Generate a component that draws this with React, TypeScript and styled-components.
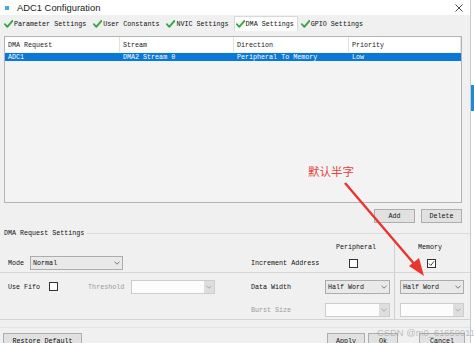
import React from 'react';
import styled, { createGlobalStyle } from 'styled-components';

const MONO = `"Liberation Mono", "DejaVu Sans Mono", monospace`;
const SANS = `"Liberation Sans", Arial, sans-serif`;

const GlobalStyle = createGlobalStyle`
  html, body {
    margin: 0;
    padding: 0;
    background: #ffffff;
    overflow: hidden;
  }
`;

const Page = styled.div`
  position: relative;
  display: flex;
  width: 474px;
  height: 343px;
  overflow: hidden;
  background: #ffffff;
`;

const Window = styled.div`
  width: 471px;
  height: 360px;
  flex-shrink: 0;
  display: flex;
  flex-direction: column;
  background: #f0f0f0;
  border-right: 1px solid #c9c9c9;
  box-sizing: border-box;
`;

const EdgeStrip = styled.div`
  flex: 1;
  display: flex;
  flex-direction: column;
`;

const EdgeBlue = styled.div`
  margin-top: 85px;
  height: 26px;
  background: #1b8bd6;
`;

const TitleBar = styled.div`
  height: 15px;
  flex-shrink: 0;
  display: flex;
  align-items: center;
  padding: 0 7px 0 5px;
  background: #ffffff;
  font: 9.4px ${SANS};
  color: #1a1a1a;
`;

const TitleIcon = styled.div`
  width: 4px;
  height: 4px;
  margin-right: 8px;
  background: #4aa6dc;
`;

const TitleText = styled.div`
  flex: 1;
`;

const TabBar = styled.div`
  height: 16px;
  flex-shrink: 0;
  display: flex;
  align-items: flex-end;
  gap: 1px;
  padding-left: 2px;
  background: #f0f0f0;
`;

const Tab = styled.div<{ $active?: boolean }>`
  height: 15px;
  display: flex;
  align-items: center;
  gap: 1px;
  padding: 0 3px 0 1px;
  box-sizing: border-box;
  font: 6.7px ${MONO};
  color: #111;
  background: ${p => (p.$active ? '#ffffff' : '#f0f0f0')};
  border: 1px solid ${p => (p.$active ? '#d9d9d9' : 'transparent')};
  border-bottom: none;
`;

const Content = styled.div`
  display: flex;
  flex-direction: column;
  padding: 5px 8px 0 4px;
`;

const Table = styled.div`
  height: 167px;
  box-sizing: border-box;
  border: 1px solid #b4b4b4;
  background: #f3f3f3;
  display: flex;
  flex-direction: column;
  gap: 1px;
`;

const TableRow = styled.div<{ $head?: boolean; $selected?: boolean }>`
  display: grid;
  grid-template-columns: 115px 114px 115px 1fr;
  height: ${p => (p.$head ? '15px' : '8px')};
  background: ${p => (p.$head ? '#ffffff' : p.$selected ? '#0a78d4' : 'transparent')};
  color: ${p => (p.$selected ? '#ffffff' : '#1a1a1a')};
  font: 6.7px ${MONO};
`;

const Cell = styled.div<{ $head?: boolean }>`
  display: flex;
  align-items: center;
  padding-left: 3px;
  white-space: nowrap;
  border-right: ${p => (p.$head ? '1px solid #e2e2e2' : 'none')};
`;

const ButtonRow = styled.div`
  display: flex;
  justify-content: flex-end;
  gap: 6px;
  margin-top: 6px;
`;

const Button = styled.div<{ $w: number }>`
  width: ${p => p.$w}px;
  height: 14px;
  box-sizing: border-box;
  display: flex;
  align-items: center;
  justify-content: center;
  background: #e1e1e1;
  border: 1px solid #adadad;
  font: 6.7px ${MONO};
  color: #111;
`;

const GroupHeader = styled.div`
  display: flex;
  align-items: center;
  gap: 3px;
  height: 12px;
  margin-top: 4px;
  font: 6.7px ${MONO};
  color: #111;
`;

const GroupLine = styled.div`
  flex: 1;
  height: 1px;
  background: #dcdcdc;
  margin-right: -8px;
`;

const SettingsGrid = styled.div`
  display: grid;
  grid-template-columns: 245px 80px 69px 1fr;
  grid-template-rows: 15px 18px 1px 27px 19px;
  border-bottom: 1px solid #d2d2d2;
  font: 6.7px ${MONO};
  color: #111;
`;

const GridCell = styled.div<{ $pad?: number; $mem?: boolean; $gray?: boolean }>`
  display: flex;
  align-items: center;
  padding-left: ${p => p.$pad ?? 0}px;
  border-left: ${p => (p.$mem ? '1px solid #cfcfcf' : 'none')};
  color: ${p => (p.$gray ? '#9a9a9a' : '#111')};
  white-space: nowrap;
`;

const Divider = styled.div`
  grid-column: 1 / -1;
  background: #d6d6d6;
`;

const Label = styled.span<{ $gray?: boolean; $gap?: number; $lead?: number }>`
  color: ${p => (p.$gray ? '#9a9a9a' : '#111')};
  margin-right: ${p => p.$gap ?? 0}px;
  margin-left: ${p => p.$lead ?? 0}px;
`;

const SelectBox = styled.div<{ $w: number; $disabled?: boolean }>`
  width: ${p => p.$w}px;
  height: 14px;
  box-sizing: border-box;
  display: flex;
  align-items: stretch;
  border: 1px solid ${p => (p.$disabled ? '#cdcdcd' : '#acacac')};
  background: ${p => (p.$disabled ? '#fcfcfc' : '#e9e9e9')};
  color: #111;
`;

const SelectValue = styled.div`
  flex: 1;
  display: flex;
  align-items: center;
  padding-left: 2px;
`;

const SelectArrow = styled.div<{ $disabled?: boolean }>`
  width: 10px;
  display: flex;
  align-items: center;
  justify-content: center;
  background: ${p => (p.$disabled ? '#dedede' : 'transparent')};
`;

const CheckBox = styled.div`
  width: 9px;
  height: 9px;
  box-sizing: border-box;
  border: 1px solid #333;
  background: #fff;
  display: flex;
  align-items: center;
  justify-content: center;
`;

const Footer = styled.div`
  margin-top: 7px;
  border-top: 1px solid #e4e4e4;
  padding: 5px 5px 0 3px;
  display: flex;
  align-items: flex-start;
`;

const FooterRight = styled.div`
  margin-left: auto;
  display: flex;
`;

const FooterButton = styled(Button)<{ $gap?: number }>`
  height: 15px;
  margin-left: ${p => p.$gap ?? 0}px;
`;

const Overlay = styled.svg`
  position: absolute;
  left: 0;
  top: 0;
  pointer-events: none;
`;

const Note = styled.div`
  position: absolute;
  left: 308px;
  top: 163px;
  font: 11.5px "Noto Sans CJK SC", "Noto Sans", sans-serif;
  color: #e8413b;
`;

const Watermark = styled.div`
  position: absolute;
  left: 377px;
  top: 327px;
  font: 9.4px ${SANS};
  color: rgba(150, 150, 150, 0.6);
  white-space: nowrap;
`;

const TabCheck = () => (
  <svg width="9" height="8" viewBox="0 0 9 8">
    <path d="M0.8 4.2 L3.3 6.8 L8.4 0.9" fill="none" stroke="#3aa84a" strokeWidth="1.9" strokeLinecap="round" strokeLinejoin="round" />
  </svg>
);

const Chevron = ({ light }: { light?: boolean }) => (
  <svg width="6" height="4" viewBox="0 0 6 4">
    <polyline points="0.5,0.8 3,3.2 5.5,0.8" fill="none" stroke={light ? '#9c9c9c' : '#5a5a5a'} strokeWidth="0.8" />
  </svg>
);

const Select = ({ w, value, disabled }: { w: number; value?: string; disabled?: boolean }) => (
  <SelectBox $w={w} $disabled={disabled}>
    <SelectValue>{value}</SelectValue>
    <SelectArrow $disabled={disabled}>
      <Chevron light={disabled} />
    </SelectArrow>
  </SelectBox>
);

const Check = ({ checked }: { checked?: boolean }) => (
  <CheckBox>
    {checked && (
      <svg width="7" height="7" viewBox="0 0 7 7">
        <polyline points="1,3.6 2.8,5.4 6,1.4" fill="none" stroke="#333" strokeWidth="0.9" />
      </svg>
    )}
  </CheckBox>
);

const tabs = ['Parameter Settings', 'User Constants', 'NVIC Settings', 'DMA Settings', 'GPIO Settings'];
const columns = ['DMA Request', 'Stream', 'Direction', 'Priority'];
const row = ['ADC1', 'DMA2 Stream 0', 'Peripheral To Memory', 'Low'];

export default function App() {
  return (
    <Page>
      <GlobalStyle />
      <Window>
        <TitleBar>
          <TitleIcon />
          <TitleText>ADC1 Configuration</TitleText>
          <svg width="8" height="8" viewBox="0 0 8 8">
            <path d="M0.5 0.5 L7.5 7.5 M7.5 0.5 L0.5 7.5" stroke="#333" strokeWidth="0.9" />
          </svg>
        </TitleBar>
        <TabBar>
          {tabs.map(t => (
            <Tab key={t} $active={t === 'DMA Settings'}>
              <TabCheck />
              {t}
            </Tab>
          ))}
        </TabBar>
        <Content>
          <Table>
            <TableRow $head>
              {columns.map(c => (
                <Cell key={c} $head>{c}</Cell>
              ))}
            </TableRow>
            <TableRow $selected>
              {row.map(c => (
                <Cell key={c}>{c}</Cell>
              ))}
            </TableRow>
          </Table>
          <ButtonRow>
            <Button $w={41}>Add</Button>
            <Button $w={41}>Delete</Button>
          </ButtonRow>
          <GroupHeader>
            DMA Request Settings
            <GroupLine />
          </GroupHeader>
        </Content>
        <SettingsGrid>
          <GridCell />
          <GridCell />
          <GridCell $pad={11}>Peripheral</GridCell>
          <GridCell $mem $pad={23}>Memory</GridCell>

          <GridCell $pad={8}>
            <Label $gap={6}>Mode</Label>
            <Select w={93} value="Normal" />
          </GridCell>
          <GridCell $pad={6}>Increment Address</GridCell>
          <GridCell $pad={24}><Check /></GridCell>
          <GridCell $mem $pad={32}><Check checked /></GridCell>

          <Divider />

          <GridCell $pad={8}>
            <Label $gap={9}>Use Fifo</Label>
            <Check />
            <Label $gray $gap={7} $lead={30}>Threshold</Label>
            <Select w={84} disabled />
          </GridCell>
          <GridCell $pad={6}>Data Width</GridCell>
          <GridCell><Select w={65} value="Half Word" /></GridCell>
          <GridCell $mem $pad={5}><Select w={64} value="Half Word" /></GridCell>

          <GridCell />
          <GridCell $pad={6} $gray>Burst Size</GridCell>
          <GridCell><Select w={65} disabled /></GridCell>
          <GridCell $mem $pad={5}><Select w={64} disabled /></GridCell>
        </SettingsGrid>
        <Footer>
          <FooterButton $w={79}>Restore Default</FooterButton>
          <FooterRight>
            <FooterButton $w={38}>Apply</FooterButton>
            <FooterButton $w={30} $gap={3}>Ok</FooterButton>
            <FooterButton $w={46} $gap={21}>Cancel</FooterButton>
          </FooterRight>
        </Footer>
      </Window>
      <EdgeStrip>
        <EdgeBlue />
      </EdgeStrip>
      <Note>默认半字</Note>
      <Overlay width="474" height="343" viewBox="0 0 474 343">
        <line x1="345" y1="183" x2="416" y2="266" stroke="#e8352e" strokeWidth="2.4" />
        <polygon points="424,276 409,266 419,258" fill="#e8352e" />
      </Overlay>
      <Watermark>CSDN @m0_61659911</Watermark>
    </Page>
  );
}
